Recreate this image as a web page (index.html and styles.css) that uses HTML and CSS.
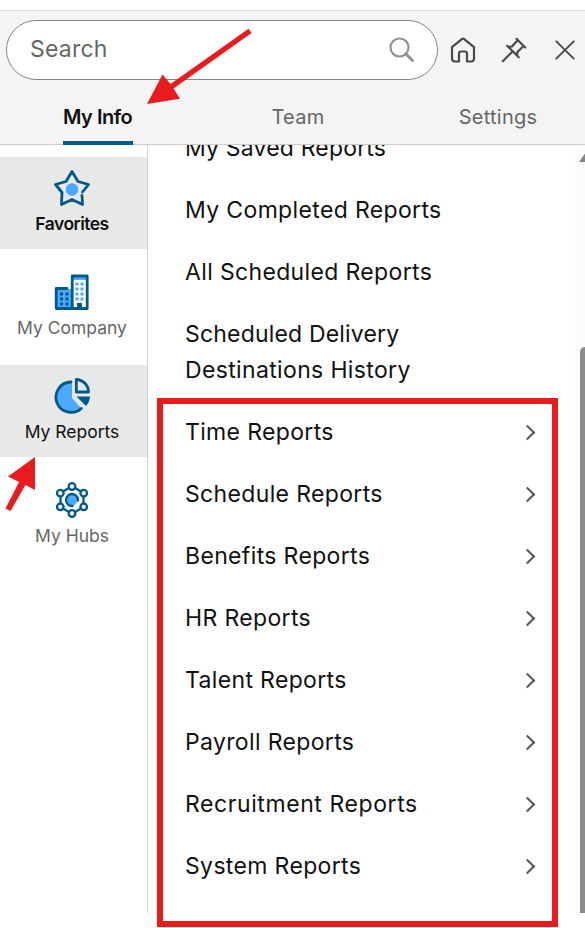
FILE: index.html
```html
<!DOCTYPE html>
<html lang="en">
<head>
  <meta charset="UTF-8" />
  <meta name="viewport" content="width=device-width, initial-scale=1.0"/>
  <title>My Reports</title>
  <link rel="stylesheet" href="styles.css">
</head>
<body>
  <div class="panel">
    <header class="header">
      <div class="toolbar">
        <div class="search">
          <span class="search-text">Search</span>
          <svg class="search-icon" width="26" height="26" viewBox="0 0 26 26"><circle cx="10.500" cy="10.500" r="9" /><path d="M17 17l6.500 6.500" stroke-width="3"/></svg>
        </div>
        <svg class="tool home" width="26" height="26" viewBox="0 0 26 26"><path d="M2 10.2L11.500 2.300q1.500-1.300 3 0L24 10.200v11.300q0 3-3 3h-4v-8q0-2-2-2h-4q-2 0-2 2v8H5q-3 0-3-3z"/></svg>
        <svg class="tool pin" width="26" height="26" viewBox="0 0 26 26"><path d="M15.500 1.800l8.700 8.700M16.800 3L11 9.500 7.500 10M22.500 9L16.500 15 16 18.500M6.200 8.700l11.500 11.500M11.500 14.500L1.800 24.200"/></svg>
        <svg class="tool close" width="20" height="20" viewBox="0 0 20 20"><path d="M1.300 1.300l17.400 17.400M18.700 1.300L1.300 18.700"/></svg>
      </div>
      <nav class="tabs">
        <a class="tab active"><span class="tab-label">My Info</span></a>
        <a class="tab"><span class="tab-label">Team</span></a>
        <a class="tab"><span class="tab-label">Settings</span></a>
      </nav>
    </header>

    <div class="main">
      <aside class="sidebar">
        <a class="side-item shaded bold">
          <svg width="36" height="36" viewBox="0 0 36 36"><path class="line" d="M28 25.500L28.500 34.500 18 29.500 7.500 34.500 8 22.500 1.500 14.500 12 11.500 18 1.500 24 11.500 34.500 14.500 28.500 22"/><circle class="fill" cx="18" cy="19.500" r="6.300"/></svg>
          <span class="side-label">Favorites</span>
        </a>
        <a class="side-item">
          <svg width="36" height="36" viewBox="0 0 36 36"><path class="fill" d="M2 15h16v19H2zM18 2h15v4H18z"/><path class="line" d="M13 14.500H2.200V34.500H33.200V2H18.200V34"/><path class="dark" d="M23 29h5v5h-5zM6 18.500h3v3H6zM11.500 18.500h3v3h-3zM6 23.500h3v3H6zM11.500 23.500h3v3h-3zM6 28.500h3v3H6zM11.500 28.500h3v3h-3z"/><path class="fill" d="M21.500 8.500h3v3h-3zM26.500 8.500h3v3h-3zM21.500 13.500h3v3h-3zM26.500 13.500h3v3h-3zM21.500 18.500h3v3h-3zM26.500 18.500h3v3h-3zM21.500 23.500h3v3h-3zM26.500 23.500h3v3h-3z"/></svg>
          <span class="side-label">My Company</span>
        </a>
        <a class="side-item shaded">
          <svg width="36" height="36" viewBox="0 0 36 36"><path class="fill" d="M18 4A15.500 15.500 0 1 0 27.500 30.500L18 20z"/><path class="line" d="M17 4A15.200 15.200 0 1 0 27.300 30.500" stroke-linecap="butt"/><path class="line" d="M22.300 1.500V14H34.500A12.600 12.600 0 0 0 22.300 1.500z"/><path class="dark" d="M22.500 18.500H36Q35.500 24.500 32 28z"/></svg>
          <span class="side-label">My Reports</span>
        </a>
        <a class="side-item">
          <svg width="36" height="36" viewBox="0 0 36 36"><path class="line thin" d="M15 6L9 9.500M21 6l6 3.500M6.500 15v6M29.500 15v6M9 26.500l6 3.500M27 26.500L21 30"/><g class="line thin"><circle cx="18" cy="4.500" r="3.300"/><circle cx="6.300" cy="11.200" r="3.300"/><circle cx="29.700" cy="11.200" r="3.300"/><circle cx="6.300" cy="24.800" r="3.300"/><circle cx="29.700" cy="24.800" r="3.300"/><circle cx="18" cy="31.500" r="3.300"/></g><circle class="fill" cx="18" cy="18" r="5.500"/><path class="line thin" d="M24 18.500A6 6 0 1 0 18.500 24"/></svg>
          <span class="side-label">My Hubs</span>
        </a>
      </aside>

      <div class="content">
        <ul class="report-list">
          <li class="tight">My Saved Reports</li>
          <li>My Completed Reports</li>
          <li>All Scheduled Reports</li>
          <li><span><span class="tight">Scheduled Delivery</span><br>Destinations History</span></li>
          <li>Time Reports <i class="chevron"></i></li>
          <li>Schedule Reports <i class="chevron"></i></li>
          <li>Benefits Reports <i class="chevron"></i></li>
          <li>HR Reports <i class="chevron"></i></li>
          <li>Talent Reports <i class="chevron"></i></li>
          <li>Payroll Reports <i class="chevron"></i></li>
          <li class="wide">Recruitment Reports <i class="chevron"></i></li>
          <li>System Reports <i class="chevron"></i></li>
        </ul>
      </div>

      <div class="scrollbar">
        <div class="scroll-up"></div>
        <div class="scroll-thumb"></div>
      </div>
    </div>
  </div>

  <!-- Markers drawn over the menu -->
  <div class="highlight"></div>
  <svg class="arrows" width="585" height="928" viewBox="0 0 585 928">
    <path d="M248.500 28.700L251.600 33 173.500 88.500 180 98.800 147 104 162.500 74.500 170.500 84z"/>
    <path d="M35 457V490L25.500 485 10.500 511 5.500 508.500 19 482 8 476.500z"/>
  </svg>
</body>
</html>
```
FILE: styles.css
```css
html, body {
  margin: 0;
  padding: 0;
  height: 100%;
  overflow: hidden;
  background-color: #fff;
  font-family: Inter, "Open Sans", sans-serif;
  color: #111;
}

.panel {
  height: 903px;
  padding-top: 10px;
  display: flex;
  flex-direction: column;
}

.header {
  box-sizing: border-box;
  height: 135px;
  padding-top: 9px;
  background-color: #f4f4f4;
  border-top: 1px solid #dfdfdf;
  border-bottom: 1px solid #ccc;
}

.toolbar {
  display: flex;
  align-items: center;
  padding-left: 6px;
}

.search {
  box-sizing: border-box;
  width: 432px;
  height: 60px;
  padding: 0 22px 0 23px;
  display: flex;
  align-items: center;
  justify-content: space-between;
  background-color: #fff;
  border: 1px solid #858585;
  border-radius: 30px;
}

.search-text {
  font-size: 23px;
  line-height: 36px;
  padding-bottom: 3px;
  letter-spacing: 0.2px;
  color: #666;
}

.search-icon {
  fill: none;
  stroke: #929292;
  stroke-width: 2.2;
  stroke-linecap: round;
}

.tool {
  flex: none;
  fill: none;
  stroke: #4a4a4a;
  stroke-width: 2.2;
  stroke-linecap: round;
  stroke-linejoin: round;
}

.home {
  margin-left: 12px;
}

.pin {
  margin-left: 25px;
}

.close {
  margin-left: 28px;
  stroke-width: 1.9;
}

.tabs {
  display: flex;
  margin-left: -2px;
}

.tab {
  flex: none;
  width: 200px;
  height: 65px;
  display: flex;
  justify-content: center;
  font-size: 20px;
  letter-spacing: 0.25px;
  color: #666;
}

.tab-label {
  box-sizing: border-box;
  height: 65px;
  padding-top: 23px;
  line-height: 28px;
  white-space: nowrap;
}

.tab.active .tab-label {
  width: 70px;
  color: #111;
  font-weight: 600;
  letter-spacing: -0.5px;
  border-bottom: 4px solid #005c8a;
}

.main {
  flex: 1;
  min-height: 0;
  display: flex;
}

.sidebar {
  width: 147px;
  padding-top: 12px;
  display: flex;
  flex-direction: column;
  gap: 12px;
  border-right: 1px solid #d2d2d2;
}

.side-item {
  box-sizing: border-box;
  height: 92px;
  padding: 13px 3px 0 0;
  display: flex;
  flex-direction: column;
  align-items: center;
  gap: 6px;
  font-size: 17.5px;
  line-height: 24px;
  color: #666;
}

.shaded {
  background-color: #e8e8e8;
  color: #111;
}

.bold {
  font-weight: 600;
  letter-spacing: -0.5px;
}

.side-label {
  white-space: nowrap;
}

.line {
  fill: none;
  stroke: #005987;
  stroke-width: 2.8;
  stroke-linecap: round;
  stroke-linejoin: round;
}

.thin {
  stroke-width: 2.3;
}

.fill {
  fill: #4ba9ff;
}

.dark {
  fill: #005987;
}

.content {
  flex: 1;
  overflow: hidden;
}

.report-list {
  list-style: none;
  margin: -28px 0 0;
  padding: 0;
}

.report-list li {
  display: flex;
  align-items: center;
  justify-content: space-between;
  padding: 13px 42px 13px 37px;
  font-size: 23px;
  line-height: 36px;
  letter-spacing: 0.35px;
}

.report-list .tight {
  letter-spacing: 0.18px;
}

.report-list .wide {
  letter-spacing: 0.58px;
}

.chevron {
  width: 9px;
  height: 9px;
  border-top: 2px solid #555;
  border-right: 2px solid #555;
  transform: rotate(45deg);
}

.scrollbar {
  width: 10px;
  background-color: #fbfbfb;
  overflow: hidden;
}

.scroll-up {
  width: 0;
  margin: 7px 0 185px 4px;
  border: 7px solid transparent;
  border-top: 0;
  border-bottom: 10px solid #858585;
}

.scroll-thumb {
  width: 10px;
  height: 700px;
  margin-left: 5px;
  border-radius: 5px;
  background-color: #8b8b8b;
}

.highlight {
  position: absolute;
  left: 157px;
  top: 397.5px;
  box-sizing: border-box;
  width: 401px;
  height: 529px;
  border: 6px solid #e81c1c;
}

.arrows {
  position: absolute;
  left: 0;
  top: 0;
  fill: #e81c1c;
}
```
